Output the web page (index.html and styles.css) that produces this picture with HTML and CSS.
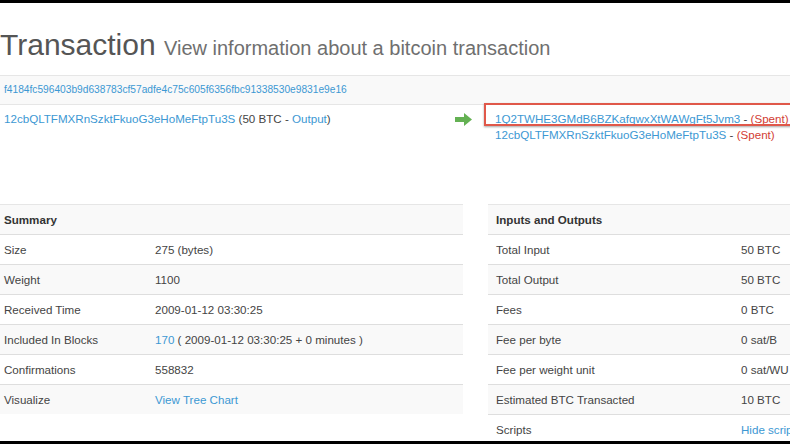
FILE: index.html
```html
<!DOCTYPE html>
<html lang="en">
<head>
    <meta charset="UTF-8">
    <meta name="viewport" content="width=device-width, initial-scale=1.0">
    <title>Transaction</title>
    <link rel="stylesheet" href="styles.css">
</head>
<body>
    <div class="topbar"></div>
    <div class="page">
        <h1>Transaction <small>View information about a bitcoin transaction</small></h1>
        <div class="hash">
            <a href="#">f4184fc596403b9d638783cf57adfe4c75c605f6356fbc91338530e9831e9e16</a>
        </div>
        <div class="io">
            <div class="inputs">
                <a href="#">12cbQLTFMXRnSzktFkuoG3eHoMeFtpTu3S</a> (50 BTC - <a href="#">Output</a>)
            </div>
            <div class="arrow">
                <svg width="17" height="13" viewBox="0 0 17 13">
                    <path d="M0 4 H9 V0 L17 6.5 L9 13 V9 H0 Z" fill="#64b153"/>
                </svg>
            </div>
            <div class="outputs">
                <div class="out first">
                    <a href="#">1Q2TWHE3GMdB6BZKafqwxXtWAWgFt5Jvm3</a> - <span class="spent">(Spent)</span>
                    <span class="mark"></span>
                </div>
                <div class="out">
                    <a href="#">12cbQLTFMXRnSzktFkuoG3eHoMeFtpTu3S</a> - <span class="spent">(Spent)</span>
                </div>
            </div>
        </div>
        <div class="tables">
            <table class="info summary">
                <tr><th colspan="2">Summary</th></tr>
                <tr><td class="label">Size</td><td>275 (bytes)</td></tr>
                <tr><td class="label">Weight</td><td>1100</td></tr>
                <tr><td class="label">Received Time</td><td>2009-01-12 03:30:25</td></tr>
                <tr><td class="label">Included In Blocks</td><td><a href="#">170</a> ( 2009-01-12 03:30:25 + 0 minutes )</td></tr>
                <tr><td class="label">Confirmations</td><td>558832</td></tr>
                <tr><td class="label">Visualize</td><td><a href="#">View Tree Chart</a></td></tr>
            </table>
            <table class="info totals">
                <tr><th colspan="2">Inputs and Outputs</th></tr>
                <tr><td class="label">Total Input</td><td>50 BTC</td></tr>
                <tr><td class="label">Total Output</td><td>50 BTC</td></tr>
                <tr><td class="label">Fees</td><td>0 BTC</td></tr>
                <tr><td class="label">Fee per byte</td><td>0 sat/B</td></tr>
                <tr><td class="label">Fee per weight unit</td><td>0 sat/WU</td></tr>
                <tr><td class="label">Estimated BTC Transacted</td><td>10 BTC</td></tr>
                <tr><td class="label">Scripts</td><td><a href="#">Hide scripts</a></td></tr>
            </table>
        </div>
    </div>
    <div class="bottombar"></div>
</body>
</html>
```

FILE: styles.css
```css
body{
    margin: 0;
    background: #fff;
    color: #444;
    font-family: "Liberation Sans", Arial, Helvetica, sans-serif;
    font-size: 11.6px;
    overflow: hidden;
    height: 444px;
    position: relative;
}
a{
    color: #3c98d3;
    text-decoration: none;
}
.topbar{
    height: 3px;
    background: #000;
}
.bottombar{
    position: absolute;
    left: 0;
    right: 0;
    top: 441px;
    height: 3px;
    background: #000;
}
.page{
    width: 1000px;
}
h1{
    margin: 25px 0 10px 0;
    font-size: 30px;
    line-height: 33px;
    font-weight: normal;
    color: #555;
    white-space: nowrap;
}
h1 small{
    font-size: 20px;
    color: #6f6f6f;
}
.hash{
    border-top: solid 1px #e6e6e6;
    border-bottom: solid 1px #e6e6e6;
    background: #f9f9f9;
    height: 28px;
    line-height: 28px;
    padding-left: 4px;
    font-size: 10.2px;
}
.io{
    display: flex;
    padding-top: 6px;
    line-height: 16px;
}
.inputs{
    width: 451px;
    padding-left: 4px;
}
.arrow{
    width: 40px;
    padding-top: 2px;
}
.outputs{
    white-space: nowrap;
}
.out.first{
    position: relative;
}
.spent{
    color: #d23c33;
}
.mark{
    position: absolute;
    left: -11px;
    top: -8px;
    width: 400px;
    height: 19px;
    border: solid 2px #e0584a;
    box-shadow: 0 1px 2px rgba(0, 0, 0, .35);
}
.tables{
    display: flex;
    align-items: flex-start;
    margin-top: 61px;
    margin-left: -4px;
    gap: 25px;
}
.info{
    width: 467px;
    border-collapse: collapse;
    font-size: inherit;
}
.info th, .info td{
    padding: 0 8px;
    height: 29px;
    line-height: 29px;
    border-top: solid 1px #dedede;
    text-align: left;
    white-space: nowrap;
}
.info th{
    font-weight: bold;
    color: #333;
    border-top-color: #e6e6e6;
}
.info tr:nth-child(odd){
    background: #f9f9f9;
}
.summary .label{
    width: 135px;
}
.totals .label{
    width: 229px;
}
```
